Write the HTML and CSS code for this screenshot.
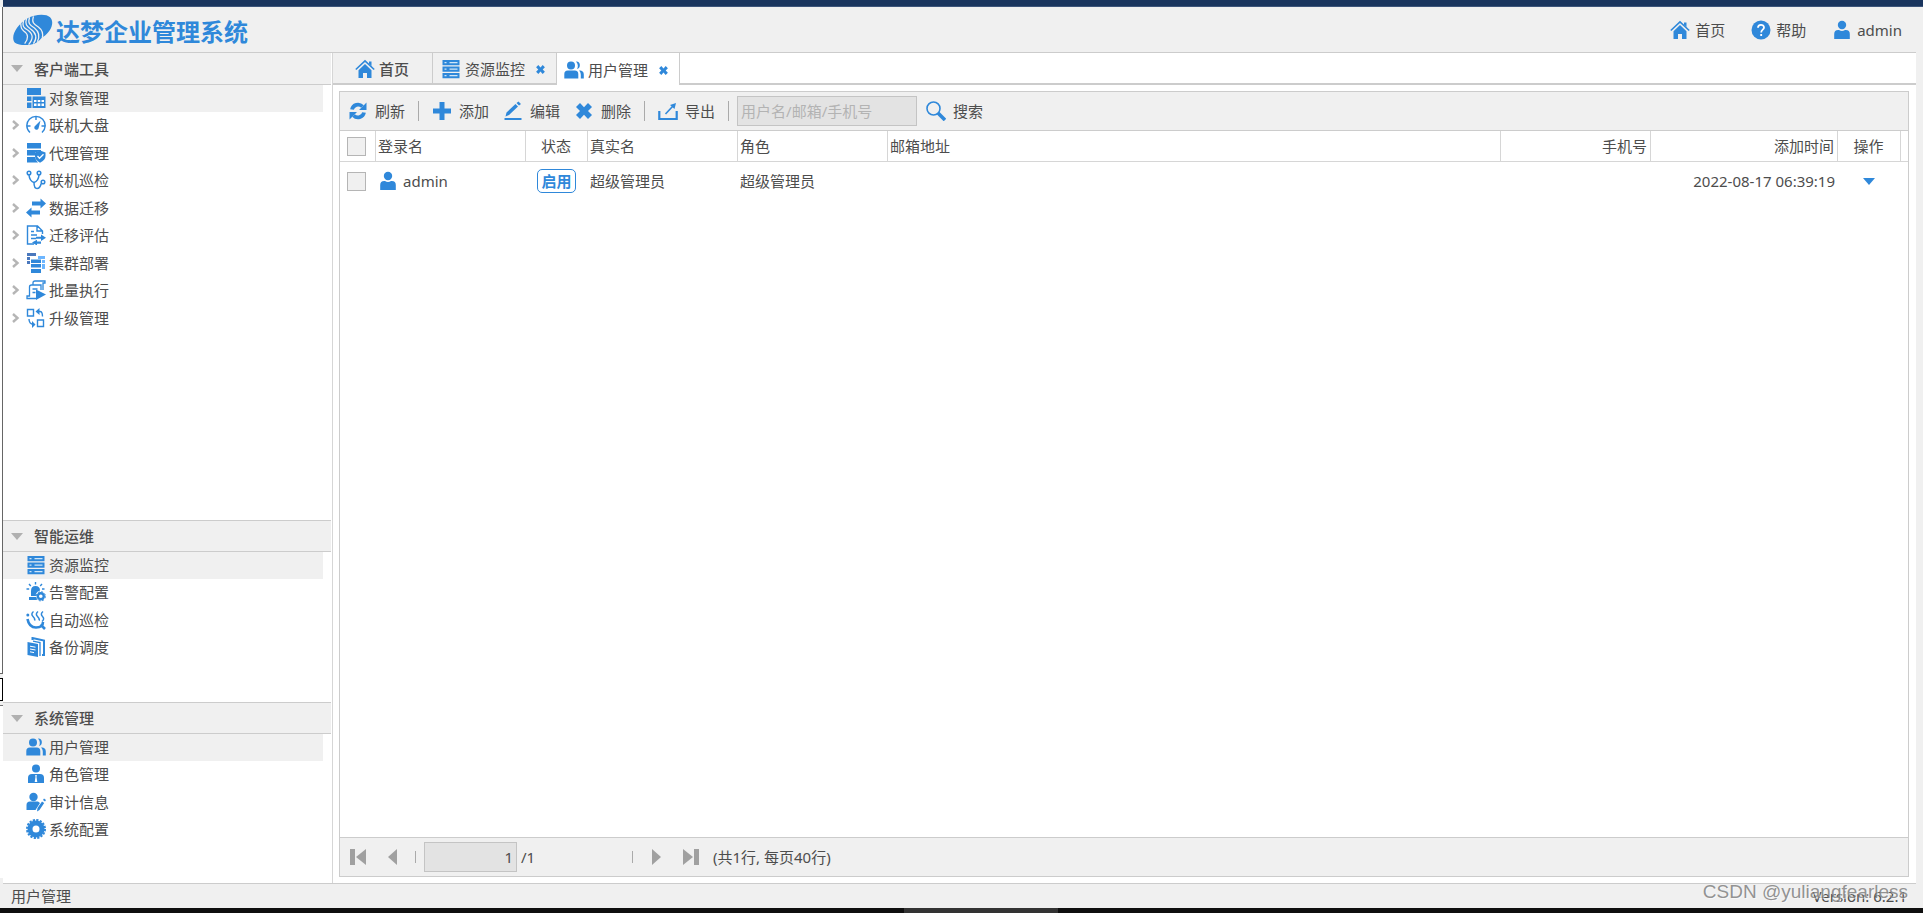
FILE: index.html
```html
<!DOCTYPE html>
<html lang="zh-CN">
  <head>
    <meta charset="UTF-8" />
    <title>达梦企业管理系统</title>
    <link rel="stylesheet" href="styles.css">
  </head>
  <body>
    <svg class="sprite" aria-hidden="true">
      <symbol id="i-home" viewBox="0 0 20 20">
        <path d="M.8 10.500 10 1.800l9.200 8.700" fill="none" stroke="currentColor" stroke-width="1.600" />
        <path d="M3.500 11.200 10 5l6.500 6.200V19H12v-5H8v5H3.500z" />
        <path d="M14 2.500h2.500V7L14 4.800z" />
      </symbol>
      <symbol id="i-help" viewBox="0 0 20 20">
        <circle cx="10" cy="10" r="9.500" />
        <path d="M7 7.800c0-4 6-3.800 6-.4 0 2.300-2.800 2.300-2.800 5M10.200 14v2" fill="none" stroke="#fff" stroke-width="1.800" />
      </symbol>
      <symbol id="i-user" viewBox="0 0 20 20">
        <circle cx="10" cy="5" r="4.200" />
        <path d="M2.200 19v-5q0-4 4-4h.8q3 2 6 0h.8q4 0 4 4v5z" />
      </symbol>
      <symbol id="i-users" viewBox="0 0 20 20">
        <circle cx="7" cy="5.500" r="4" />
        <path d="M.3 18.500V14q0-3.500 3.500-3.500h7q3.500 0 3.500 3.500v4.500z" />
        <path d="M12 1.500c5-.5 5 7 1 7.500 1.500-2 1-5.500-1-7.500zM15 10.500c4 0 4.800 2 4.800 4v4h-3V15c0-2-.5-3-1.800-4.500z" />
      </symbol>
      <symbol id="i-server" viewBox="0 0 20 20">
        <path d="M1.500 1h17v5.300h-17zM1.500 7.500h17v5.300h-17zM1.500 14h17v5.300h-17z" />
        <path d="M3.500 3.600h2m3 0h8M3.500 10.100h2m3 0h8M3.500 16.600h2m3 0h8" stroke="#cfe5f8" stroke-width="1.300" />
      </symbol>
      <symbol id="i-object" viewBox="0 0 20 20">
        <path d="M1 0h14v7H1zM1 8.500h4.500V13H1zM1 14.500h4.500V20H1z" />
        <path d="M6.500 8.500h13V20h-13z" />
        <path d="M8 12h2.500v2H8zm3.700 0h2.600v2h-2.600zm3.800 0H18v2h-2.500zM8 15.500h2.500v2.500H8zm3.700 0h2.600v2.500h-2.600zm3.800 0H18v2.500h-2.500z" fill="#fff" />
      </symbol>
      <symbol id="i-gauge" viewBox="0 0 20 20">
        <path d="M4 17.500A9.200 9.200 0 1 1 16 17.500M10 1v4M1 11h3.500M15.500 11H19" fill="none" stroke="currentColor" stroke-width="1.400" />
        <path d="m14.500 5.500-2 8a2.200 2.200 0 1 1-4-2z" />
      </symbol>
      <symbol id="i-agent" viewBox="0 0 20 20">
        <path d="M1 0h14v5.500H1zM1 7h14v1L9 9.500v3H1zM1 14h8q.5 3 3 5.500H1z" />
        <path d="m14 7.500 5.500 2V13q0 4-5.500 6.800Q9 17 9 13V9.500z" />
        <path d="m11.500 13 2 2.200 4-4" fill="none" stroke="#fff" stroke-width="1.300" />
      </symbol>
      <symbol id="i-inspect" viewBox="0 0 20 20">
        <g fill="none" stroke="currentColor" stroke-width="1.500">
          <circle cx="3" cy="3" r="1.800" /><circle cx="13" cy="3" r="1.800" /><circle cx="17" cy="12" r="1.800" />
          <path d="M3 5q.5 6 5 7.500Q12.500 11 13 5M8 12.500q0 6 3 6t4.200-5" />
        </g>
      </symbol>
      <symbol id="i-transfer" viewBox="0 0 20 20">
        <path d="M6 3.500h8.500V.5l5.500 5-5.500 5v-3H6zM14 12.500v4H5.500v3L0 14.500l5.500-5v3z" />
      </symbol>
      <symbol id="i-assess" viewBox="0 0 20 20">
        <path d="M8 19H1.500V1h10l5 5v3M11 1v5h5.500M5 6.500h3M5 10h6M5 13.500h5" fill="none" stroke="currentColor" stroke-width="1.400" />
        <path d="M10 11.700h5V9.500l5 3.300-5 3.200v-2.200h-5zM15 16.500v2.200h-4v1.800L6 17.500l5-2.800v1.800z" />
      </symbol>
      <symbol id="i-cluster" viewBox="0 0 20 20">
        <path d="M1 0h9v3H1zM1 4h3v3H1zM1 8h3v3H1z" fill="#4a78bd" />
        <path d="M12 3h7v3h-7zM16 7h3v3h-3zM16 11h3v5h-3z" fill="#6db6ff" />
        <path d="M5 6.500h10v3.500H5zM5 11h10v3.500H5zM5 16h10v4H5z" />
      </symbol>
      <symbol id="i-batch" viewBox="0 0 20 20">
        <path d="M7 4.500V3q0-2 2-2h10v2h-2v7M10 18.500H1v-2.500h2.500V7q0-2 2-2H15v5M6.500 9h5M6.500 12.500h3" fill="none" stroke="currentColor" stroke-width="1.300" />
        <path d="m10 9.500 10 5-10 5.500z" />
      </symbol>
      <symbol id="i-upgrade" viewBox="0 0 20 20">
        <path d="M1.500 1.500h6V8h-6zM11.500 12h6v6.500h-6zM11 3.500h3q2.500 0 2.500 5M3 11q0 5 4.500 5.500" fill="none" stroke="currentColor" stroke-width="1.400" />
        <path d="m9.500 3.500 4-3.500v7zM9.500 16.500 6 13v7z" />
      </symbol>
      <symbol id="i-alarm" viewBox="0 0 20 20">
        <path d="M5 14V9q0-5 4.500-5T14 8.500q-5 2-4 5.500zM3 15h7l1 3H3z" />
        <path d="M9.500 0v2.500M3 2l1.800 2M16 2l-1.800 2M.5 7h2.700M16 7h2.500" stroke="currentColor" stroke-width="1.400" />
        <circle cx="14.800" cy="14.300" r="3" fill="none" stroke="currentColor" stroke-width="2.400" />
        <circle cx="14.800" cy="14.300" r="4.600" fill="none" stroke="currentColor" stroke-width="1" stroke-dasharray="2 1.600" />
      </symbol>
      <symbol id="i-auto" viewBox="0 0 20 20">
        <path d="M7.500 1.500q-3 2.500-.5 5t1.500 4M12 1.500q-3 2.500-.5 5t1.500 4M17 1.500q-3 2.500-.5 5t-.5 5" fill="none" stroke="currentColor" stroke-width="1.500" />
        <path d="M1.500 9q1.500 8.500 8.500 8.500t7-5.500M14.500 14.500l4.500 4.500" fill="none" stroke="currentColor" stroke-width="2.600" />
        <circle cx="1.800" cy="5" r="1.500" />
      </symbol>
      <symbol id="i-backup" viewBox="0 0 20 20">
        <path d="m1.500 5 10.500 2v13l-10.500-2z" />
        <path d="M6.500 3V1l11.500 2.500V18h-2" fill="none" stroke="currentColor" stroke-width="2" />
        <path d="M14 19V5.500L7 4.200" fill="none" stroke="currentColor" stroke-width="1.300" />
        <path d="m4 9.200 5.500 1M4 12l5.500 1M4 14.800l4 .8" stroke="#fff" stroke-width="1" />
      </symbol>
      <symbol id="i-role" viewBox="0 0 20 20">
        <circle cx="10" cy="4.500" r="4" />
        <path d="M2 19v-5q0-4 4-4h8q4 0 4 4v5z" />
        <path d="M9.200 11h1.600l-.3 2 .8 5H8.700l.8-5z" fill="#fff" />
      </symbol>
      <symbol id="i-audit" viewBox="0 0 20 20">
        <circle cx="7.500" cy="5" r="4.200" />
        <path d="M.5 18v-5q0-3.500 3.500-3.500h8l2 1.500-4.500 7zM11 19.500l.5-3.500 4.500-6.500 2.200 1.500-4.700 7zM17 8l1-1.500 2 1.500-1 1.500z" />
      </symbol>
      <symbol id="i-gear" viewBox="0 0 20 20">
        <circle cx="10" cy="10" r="6" fill="none" stroke="currentColor" stroke-width="5" />
        <circle cx="10" cy="10" r="9" fill="none" stroke="currentColor" stroke-width="2" stroke-dasharray="2.200 1.334" />
      </symbol>
      <symbol id="i-refresh" viewBox="0 0 20 20">
        <path d="M4 8.500C5 3.500 11 2 14.500 5.500M16 11.500C15 16.500 9 18 5.500 14.500" fill="none" stroke="currentColor" stroke-width="3.800" />
        <path d="M18.500 1.500v7.500H11zM1.500 18.500V11H9z" />
      </symbol>
      <symbol id="i-plus" viewBox="0 0 20 20">
        <path d="M7.500 1h5v6.500H19v5h-6.500V19h-5v-6.500H1v-5h6.500z" />
      </symbol>
      <symbol id="i-edit" viewBox="0 0 20 20">
        <path d="M1.500 17h17v2h-17zM2.500 15.500l1-4 9-8.500 2.500 2.500-9 8.500zM13.500 2l2-1.500L18 3l-2 1.500z" />
      </symbol>
      <symbol id="i-cross" viewBox="0 0 20 20">
        <path d="M6 2 10 6.300 14 2l4 4-4 4 4 4-4 4-4-4.300L6 18l-4-4 4-4-4-4z" />
      </symbol>
      <symbol id="i-export" viewBox="0 0 20 20">
        <path d="M1.300 10v8h17.400v-8" fill="none" stroke="currentColor" stroke-width="2.200" />
        <path d="m7.500 13 7.500-8" stroke="currentColor" stroke-width="1.600" />
        <path d="m18 2-1.500 6L12 4z" />
      </symbol>
      <symbol id="i-search" viewBox="0 0 20 20">
        <circle cx="7.500" cy="7.500" r="6.500" fill="none" stroke="currentColor" stroke-width="1.600" />
        <path d="m12 12 7 7" stroke="currentColor" stroke-width="3.600" />
      </symbol>
      <symbol id="i-chevron" viewBox="0 0 8 10">
        <path d="m1 1 4.500 4L1 9" fill="none" stroke="currentColor" stroke-width="2.400" />
      </symbol>
      <symbol id="i-down" viewBox="0 0 12 7"><path d="M0 0h12L6 7z" /></symbol>
      <symbol id="i-first" viewBox="0 0 16 16"><path d="M0 0h5v16H0zM16 0v16L6 8z" /></symbol>
      <symbol id="i-prev" viewBox="0 0 16 16"><path d="M12 0v16L3 8z" /></symbol>
      <symbol id="i-next" viewBox="0 0 16 16"><path d="M4 0v16l9-8z" /></symbol>
      <symbol id="i-last" viewBox="0 0 16 16"><path d="M16 0h-5v16h5zM0 0v16l10-8z" /></symbol>
    </svg>

    <div class="topline"></div>

    <div class="window">
      <div class="edge">
        <div class="edge-top"></div>
        <div class="edge-box"></div>
        <div class="edge-bottom"></div>
      </div>

      <div class="app">
        <header class="header">
          <svg class="logo" viewBox="0 0 42 32" aria-hidden="true">
            <path d="M16 4C23 0 35-1 39 3c5 5 1 15-7 20-3 2-4 5-9 7-6 2-16 2-20-1C-2 24 4 11 16 4z" fill="#2f88da" />
            <g fill="none" stroke="#f0f0f0" stroke-width="1.300">
              <path d="M12 6c-2 6 0 8 4 10 6 4 6 9 1 15" />
              <path d="M15 4c-2 6 0 8 4 11 6 4 7 9 3 15" />
              <path d="M18 3c-2 6 0 8 5 11 5 4 6 8 3 14" />
              <path d="M22 2c-2 6 0 8 5 11 4 3 5 7 4 11" />
              <path d="M9 9c0 5 1 6 3 8 5 3 5 8 1 13" />
            </g>
          </svg>
          <h1 class="brand">达梦企业管理系统</h1>
          <nav class="header-nav">
            <a href="#home"><svg class="icon"><use href="#i-home" /></svg>首页</a>
            <a href="#help"><svg class="icon"><use href="#i-help" /></svg>帮助</a>
            <a href="#admin"><svg class="icon"><use href="#i-user" /></svg>admin</a>
          </nav>
        </header>

        <div class="body">
          <aside class="sidebar">
            <section class="group group-tools">
              <button class="group-title" type="button"><svg class="arrow"><use href="#i-down" /></svg>客户端工具</button>
              <ul class="menu">
                <li><a href="#object" class="selected"><span class="expand"></span><svg class="icon"><use href="#i-object" /></svg>对象管理</a></li>
                <li><a href="#dashboard"><svg class="expand"><use href="#i-chevron" /></svg><svg class="icon"><use href="#i-gauge" /></svg>联机大盘</a></li>
                <li><a href="#agent"><svg class="expand"><use href="#i-chevron" /></svg><svg class="icon"><use href="#i-agent" /></svg>代理管理</a></li>
                <li><a href="#inspect"><svg class="expand"><use href="#i-chevron" /></svg><svg class="icon"><use href="#i-inspect" /></svg>联机巡检</a></li>
                <li><a href="#transfer"><svg class="expand"><use href="#i-chevron" /></svg><svg class="icon"><use href="#i-transfer" /></svg>数据迁移</a></li>
                <li><a href="#assess"><svg class="expand"><use href="#i-chevron" /></svg><svg class="icon"><use href="#i-assess" /></svg>迁移评估</a></li>
                <li><a href="#cluster"><svg class="expand"><use href="#i-chevron" /></svg><svg class="icon"><use href="#i-cluster" /></svg>集群部署</a></li>
                <li><a href="#batch"><svg class="expand"><use href="#i-chevron" /></svg><svg class="icon"><use href="#i-batch" /></svg>批量执行</a></li>
                <li><a href="#upgrade"><svg class="expand"><use href="#i-chevron" /></svg><svg class="icon"><use href="#i-upgrade" /></svg>升级管理</a></li>
              </ul>
            </section>

            <section class="group">
              <button class="group-title" type="button"><svg class="arrow"><use href="#i-down" /></svg>智能运维</button>
              <ul class="menu">
                <li><a href="#monitor" class="selected"><span class="expand"></span><svg class="icon"><use href="#i-server" /></svg>资源监控</a></li>
                <li><a href="#alarm"><span class="expand"></span><svg class="icon"><use href="#i-alarm" /></svg>告警配置</a></li>
                <li><a href="#auto"><span class="expand"></span><svg class="icon"><use href="#i-auto" /></svg>自动巡检</a></li>
                <li><a href="#backup"><span class="expand"></span><svg class="icon"><use href="#i-backup" /></svg>备份调度</a></li>
              </ul>
            </section>

            <section class="group group-system">
              <button class="group-title" type="button"><svg class="arrow"><use href="#i-down" /></svg>系统管理</button>
              <ul class="menu">
                <li><a href="#users" class="selected"><span class="expand"></span><svg class="icon"><use href="#i-users" /></svg>用户管理</a></li>
                <li><a href="#roles"><span class="expand"></span><svg class="icon"><use href="#i-role" /></svg>角色管理</a></li>
                <li><a href="#audit"><span class="expand"></span><svg class="icon"><use href="#i-audit" /></svg>审计信息</a></li>
                <li><a href="#config"><span class="expand"></span><svg class="icon"><use href="#i-gear" /></svg>系统配置</a></li>
              </ul>
            </section>
          </aside>

          <main class="main">
            <div class="tabs">
              <div class="tab tab-home">
                <button type="button"><svg class="icon"><use href="#i-home" /></svg>首页</button>
              </div>
              <div class="tab">
                <button type="button"><svg class="icon"><use href="#i-server" /></svg>资源监控</button>
                <button type="button" class="tab-close" aria-label="关闭资源监控"><svg><use href="#i-cross" /></svg></button>
              </div>
              <div class="tab active">
                <button type="button"><svg class="icon"><use href="#i-users" /></svg>用户管理</button>
                <button type="button" class="tab-close" aria-label="关闭用户管理"><svg><use href="#i-cross" /></svg></button>
              </div>
            </div>

            <div class="panel">
              <div class="toolbar">
                <button type="button" class="tool"><svg class="icon"><use href="#i-refresh" /></svg>刷新</button>
                <span class="sep"></span>
                <button type="button" class="tool"><svg class="icon"><use href="#i-plus" /></svg>添加</button>
                <button type="button" class="tool"><svg class="icon"><use href="#i-edit" /></svg>编辑</button>
                <button type="button" class="tool"><svg class="icon"><use href="#i-cross" /></svg>删除</button>
                <span class="sep"></span>
                <button type="button" class="tool"><svg class="icon"><use href="#i-export" /></svg>导出</button>
                <form class="search">
                  <span class="sep"></span>
                  <input type="text" class="field" placeholder="用户名/邮箱/手机号" aria-label="用户名/邮箱/手机号" />
                  <button type="button" class="tool"><svg class="icon"><use href="#i-search" /></svg>搜索</button>
                </form>
              </div>

              <div class="grid">
                <table>
                  <colgroup>
                    <col class="col-check" />
                    <col class="col-text" />
                    <col class="col-status" />
                    <col class="col-text" />
                    <col class="col-text" />
                    <col />
                    <col class="col-text" />
                    <col class="col-time" />
                    <col class="col-action" />
                    <col class="col-rest" />
                  </colgroup>
                  <thead>
                    <tr>
                      <th class="center"><input type="checkbox" aria-label="全选" /></th>
                      <th>登录名</th>
                      <th class="center">状态</th>
                      <th>真实名</th>
                      <th>角色</th>
                      <th>邮箱地址</th>
                      <th class="right">手机号</th>
                      <th class="right">添加时间</th>
                      <th class="center">操作</th>
                      <th></th>
                    </tr>
                  </thead>
                  <tbody>
                    <tr>
                      <td class="center"><input type="checkbox" aria-label="选择 admin" /></td>
                      <td><span class="login"><svg class="icon"><use href="#i-user" /></svg>admin</span></td>
                      <td class="center"><span class="badge">启用</span></td>
                      <td>超级管理员</td>
                      <td>超级管理员</td>
                      <td></td>
                      <td></td>
                      <td class="right">2022-08-17 06:39:19</td>
                      <td class="center"><button type="button" class="more" aria-label="操作"><svg><use href="#i-down" /></svg></button></td>
                      <td></td>
                    </tr>
                  </tbody>
                </table>
              </div>

              <div class="pager">
                <div class="pager-nav">
                  <button type="button" aria-label="第一页"><svg><use href="#i-first" /></svg></button>
                  <button type="button" aria-label="上一页"><svg><use href="#i-prev" /></svg></button>
                </div>
                <span class="sep"></span>
                <label class="page">
                  <input type="text" class="field page-field" value="1" aria-label="页码" />
                  /1
                </label>
                <span class="sep"></span>
                <div class="pager-nav">
                  <button type="button" aria-label="下一页"><svg><use href="#i-next" /></svg></button>
                  <button type="button" aria-label="最后一页"><svg><use href="#i-last" /></svg></button>
                </div>
                <span>(共1行, 每页40行)</span>
              </div>
            </div>
          </main>
        </div>

        <footer class="statusbar">
          <span>用户管理</span>
          <span>Version: 6.2.1</span>
          <span class="watermark">CSDN @yuliangfearless</span>
        </footer>
      </div>
    </div>

    <div class="bottomline"><div class="bottomline-thumb"></div></div>
  </body>
</html>
```
FILE: styles.css
```css
* {
  box-sizing: border-box;
}

body {
  margin: 0;
  height: 100vh;
  overflow: hidden;
  display: flex;
  flex-direction: column;
  background: #f0f0f0;
  color: #4d4d4d;
  font-family: "Noto Sans", "Noto Sans CJK SC", sans-serif;
  font-size: 15px;
  line-height: 20px;
}

button,
input {
  font: inherit;
  color: inherit;
}

button {
  display: flex;
  align-items: center;
  padding: 0;
  border: none;
  background: none;
  cursor: pointer;
}

a {
  color: inherit;
  text-decoration: none;
}

svg {
  fill: currentColor;
  flex: none;
}

.sprite {
  position: absolute;
  width: 0;
  height: 0;
}

.icon {
  width: 20px;
  height: 20px;
  color: #2f88da;
}

/* window frame */
.topline {
  flex: none;
  height: 7px;
  margin-left: 3px;
  background: #1a355e;
  border-bottom: 1px solid #3d557b;
}

.window {
  flex: 1;
  min-height: 0;
  display: flex;
}

.edge {
  width: 3px;
  display: flex;
  flex-direction: column;
  gap: 4px;
  background: #f0f0f0;
}

.edge-top {
  flex: 1;
  background: #fff;
  border-right: 1px solid #666;
  border-bottom: 1px solid #666;
}

.edge-box {
  height: 23px;
  background: #fff;
  border: 1px solid #000;
  border-left: none;
}

.edge-bottom {
  height: 173px;
  margin-bottom: 30px;
  background: #fff;
  border-top: 1px solid #777;
}

.app {
  flex: 1;
  min-width: 0;
  display: flex;
  flex-direction: column;
}

/* header */
.header {
  height: 46px;
  margin-right: 7px;
  padding: 0 14px 0 9px;
  display: flex;
  align-items: center;
  background: #f0f0f0;
  border-bottom: 1px solid #ccc;
}

.logo {
  width: 41px;
  height: 32px;
}

.brand {
  flex: 1;
  margin: 4px 0 0 3px;
  color: #2f88da;
  font-size: 24px;
  line-height: 32px;
  font-weight: 700;
}

.header-nav {
  display: flex;
  gap: 26px;
}

.header-nav a {
  display: flex;
  align-items: center;
  gap: 5px;
}

.body {
  flex: 1;
  min-height: 0;
  display: flex;
  margin-right: 7px;
  background: #fff;
}

/* sidebar */
.sidebar {
  flex: none;
  width: 330px;
  display: flex;
  flex-direction: column;
  border-right: 1px solid #d6d6d6;
}

.group {
  padding-bottom: 40px;
}

.group-tools {
  flex: 1;
}

.group-system {
  padding-bottom: 39px;
}

.group-title {
  width: 328px;
  height: 32px;
  padding-left: 8px;
  gap: 11px;
  background: #f0f0f0;
  border-top: 1px solid #ccc;
  border-bottom: 1px solid #ccc;
  font-weight: 500;
}

.group-tools .group-title {
  border-top: none;
}

.arrow {
  width: 12px;
  height: 7px;
  color: #b0b0b0;
}

.menu {
  margin: 0 9px 0 0;
  padding: 0;
  list-style: none;
}

.menu a {
  height: 27px;
  padding: 0 0 2px 9px;
  display: flex;
  align-items: center;
  gap: 3px;
}

.menu li:nth-child(even) a {
  height: 28px;
}

.menu .selected {
  background: #f0f0f0;
}

.expand {
  width: 8px;
  height: 10px;
  margin-right: 3px;
  color: #b5b5b5;
}

/* tabs */
.main {
  flex: 1;
  min-width: 0;
  display: flex;
  flex-direction: column;
}

.tabs {
  height: 32px;
  display: flex;
  border-bottom: 2px solid #ccc;
}

.tab {
  display: flex;
  align-items: center;
  gap: 10px;
  padding: 2px 10px 0 8px;
  background: #f0f0f0;
  border-right: 1px solid #ccc;
}

.tab button {
  gap: 4px;
}

.tab-home {
  padding: 2px 23px 0 22px;
  font-weight: 500;
}

.tab.active {
  height: 32px;
  padding-left: 7px;
  background: #fff;
}

.tab-close svg {
  width: 11px;
  height: 11px;
  color: #2f88da;
}

/* panel */
.panel {
  flex: 1;
  min-height: 0;
  display: flex;
  flex-direction: column;
  margin: 6px 7px 6px 6px;
  border: 1px solid #ccc;
}

.toolbar {
  height: 39px;
  padding-left: 7px;
  display: flex;
  align-items: center;
  gap: 12px;
  background: #f0f0f0;
  border-bottom: 1px solid #ccc;
}

.tool {
  gap: 7px;
  padding: 0 1px;
}

.sep {
  width: 1px;
  height: 20px;
  background: #aaa;
}

.search {
  display: flex;
  align-items: center;
  gap: 8px;
}

.field {
  width: 180px;
  height: 30px;
  padding: 0 3px;
  background: #e3e3e3;
  border: 1px solid #c4c4c4;
  border-radius: 0;
}

.field::placeholder {
  color: #b3b3b3;
}

.grid {
  flex: 1;
  overflow: auto;
}

table {
  width: 100%;
  table-layout: fixed;
  border-spacing: 0;
}

.col-check {
  width: 36px;
}

.col-text {
  width: 150px;
}

.col-status {
  width: 62px;
}

.col-time {
  width: 187px;
}

.col-action {
  width: 63px;
}

.col-rest {
  width: 7px;
}

th,
td {
  height: 31px;
  padding: 0 3px 0 2px;
  font-weight: 400;
  text-align: left;
}

th {
  border-right: 1px solid #d6d6d6;
  border-bottom: 1px solid #d6d6d6;
}

th:last-child {
  padding: 0;
  border-right: none;
}

td {
  height: 38px;
}

.center {
  text-align: center;
}

.right {
  text-align: right;
}

input[type="checkbox"] {
  appearance: none;
  display: block;
  width: 19px;
  height: 19px;
  margin: 0 0 0 5px;
  background: #f0f0f0;
  border: 1px solid #b5b5b5;
}

.login {
  display: flex;
  align-items: center;
  gap: 5px;
}

.badge {
  display: inline-block;
  height: 24px;
  padding: 0 3px;
  line-height: 22px;
  color: #2f88da;
  font-weight: 700;
  border: 1px solid #2f88da;
  border-radius: 5px;
}

.more {
  margin: 0 auto;
  color: #2f88da;
}

.more svg {
  width: 12px;
  height: 7px;
}

/* pager */
.pager {
  height: 39px;
  padding-left: 10px;
  display: flex;
  align-items: center;
  background: #f0f0f0;
  border-top: 1px solid #ccc;
}

.pager-nav {
  display: flex;
  gap: 19px;
  margin-right: 14px;
  color: #a0a0a0;
}

.pager-nav button {
  color: inherit;
}

.pager svg {
  width: 16px;
  height: 16px;
}

.pager .sep {
  height: 12px;
}

.page {
  width: 208px;
  display: flex;
  align-items: center;
  gap: 4px;
  margin-left: 8px;
}

.page-field {
  width: 93px;
  text-align: right;
}

.sep + .pager-nav {
  margin-left: 15px;
}

/* status bar */
.statusbar {
  position: relative;
  height: 25px;
  padding: 2px 9px 0 8px;
  margin-right: 7px;
  display: flex;
  justify-content: space-between;
  border-top: 1px solid #ccc;
}

.watermark {
  position: absolute;
  right: 8px;
  top: -2px;
  color: rgba(120, 120, 120, 0.8);
  font-family: "Liberation Sans", sans-serif;
  font-size: 19px;
  text-shadow: 1px 1px 0 rgba(255, 255, 255, 0.5);
}

.bottomline {
  flex: none;
  height: 5px;
  display: flex;
  background: #0f0f0f;
}

.bottomline-thumb {
  width: 8%;
  margin-left: 47%;
  background: #333;
}
```
